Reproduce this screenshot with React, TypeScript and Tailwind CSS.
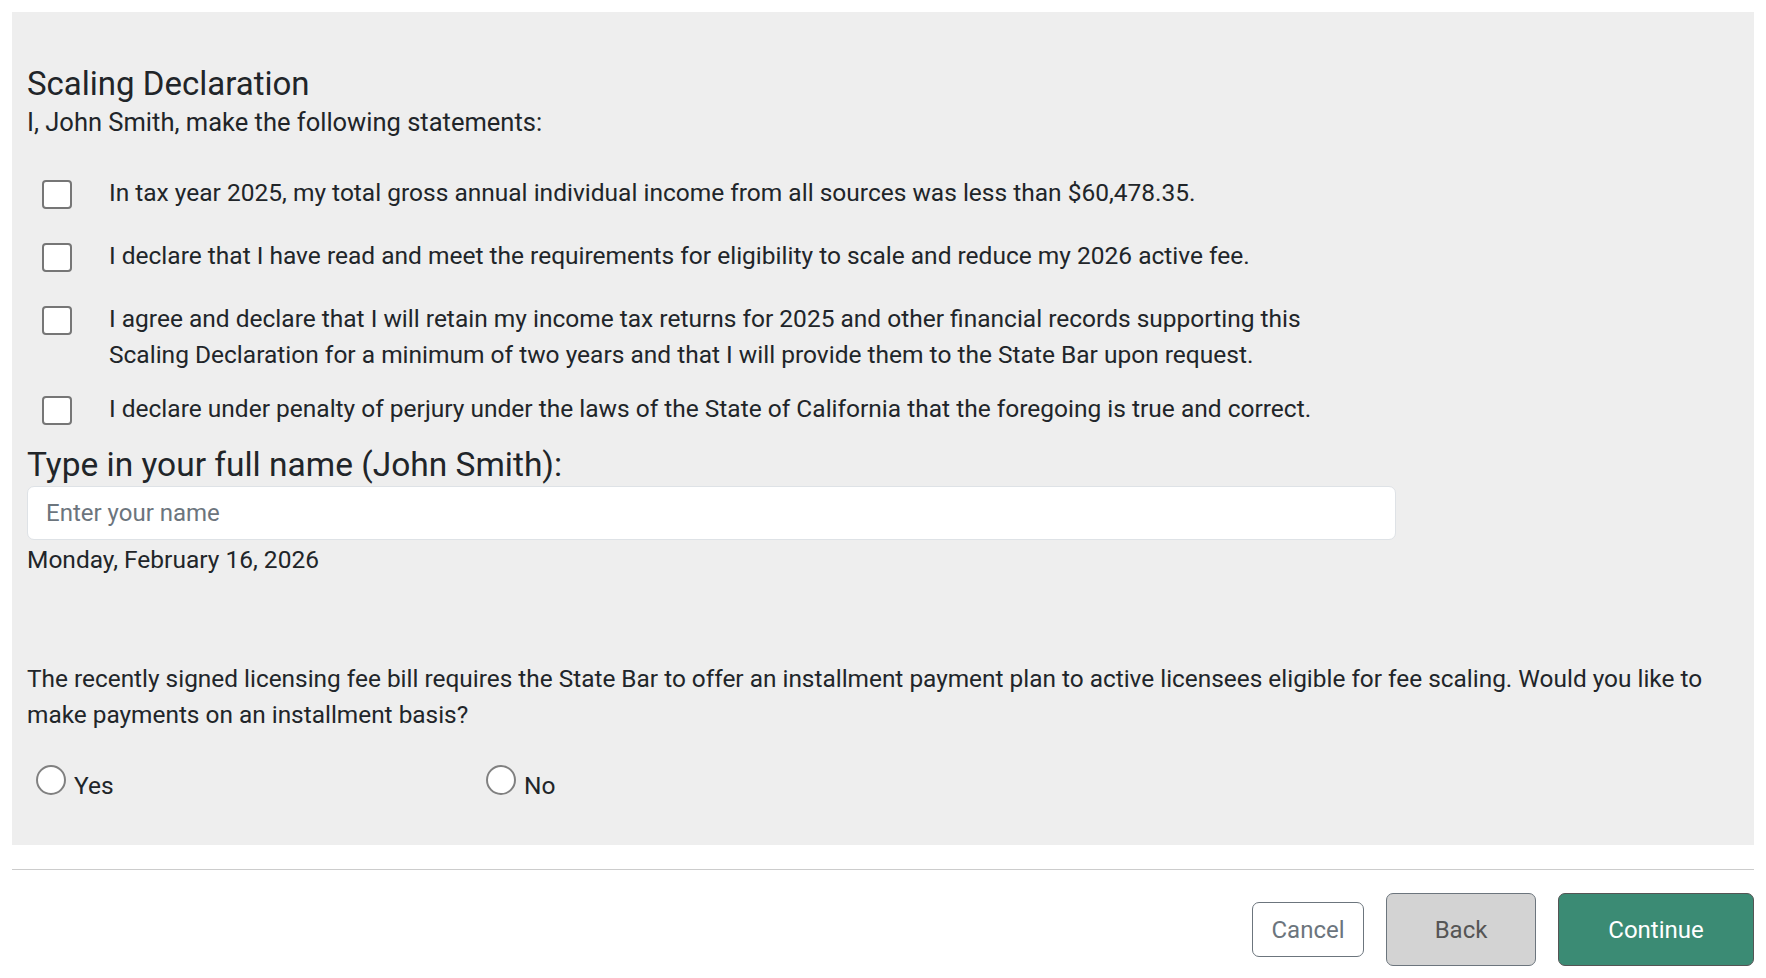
import React from "react";

const statements = [
  "In tax year 2025, my total gross annual individual income from all sources was less than $60,478.35.",
  "I declare that I have read and meet the requirements for eligibility to scale and reduce my 2026 active fee.",
  "I agree and declare that I will retain my income tax returns for 2025 and other financial records supporting this Scaling Declaration for a minimum of two years and that I will provide them to the State Bar upon request.",
  "I declare under penalty of perjury under the laws of the State of California that the foregoing is true and correct.",
];

function CheckRow({ text }: { text: string }) {
  return (
    <label className="flex items-start">
      <span className="ml-[15px] mt-[14px] mb-[20px] w-[30px] h-[29px] shrink-0 rounded-[4px] border-2 border-[#767676] bg-white" />
      <span className="ml-[37px] max-w-[1240px] py-[9px] leading-[36px] text-[24.5px]">{text}</span>
    </label>
  );
}

function Radio({ label }: { label: string }) {
  return (
    <label className="flex items-start w-[450px]">
      <span className="w-[30px] h-[30px] shrink-0 rounded-full border-2 border-[#808080] bg-white" />
      <span className="ml-[8px] pt-[3px] leading-[36px] text-[24.5px]">{label}</span>
    </label>
  );
}

export default function App() {
  return (
    <div className="min-h-screen bg-white px-[12px] pt-[12px] font-['Roboto',sans-serif] text-[24px] text-[#212529]">
      <div className="bg-[#eeeeee] px-[15px] pt-[53px] pb-[41px]">
        <h2 className="text-[33px] leading-[37px]">Scaling Declaration</h2>
        <p className="mt-[2px] leading-[36px] text-[25.5px]">I, John Smith, make the following statements:</p>

        <div className="mt-[26px]">
          {statements.map((s) => (
            <CheckRow key={s} text={s} />
          ))}
        </div>

        <h3 className="text-[33.5px] leading-[40px]">Type in your full name (John Smith):</h3>
        <input
          type="text"
          placeholder="Enter your name"
          className="mt-[1px] block w-[1369px] h-[54px] rounded-[7px] border border-[#dee2e6] bg-white px-[18px] text-[24px] placeholder:text-[#6c757d] outline-none"
        />
        <p className="mt-[2px] leading-[36px] text-[24.5px]">Monday, February 16, 2026</p>

        <p className="mt-[83px] leading-[36px] text-[24.4px]">
          The recently signed licensing fee bill requires the State Bar to offer an installment payment plan to active
          licensees eligible for fee scaling. Would you like to make payments on an installment basis?
        </p>

        <div className="mt-[32px] flex pl-[9px]">
          <Radio label="Yes" />
          <Radio label="No" />
        </div>
      </div>

      <hr className="mt-[24px] border-t border-[#cccccc]" />

      <div className="mt-[23px] flex items-center justify-end gap-[22px]">
        <button className="h-[55px] w-[112px] rounded-[7px] border border-[#6c757d] bg-white text-[#6c757d]">
          Cancel
        </button>
        <button className="h-[73px] w-[150px] rounded-[7px] border border-[#6c757d] bg-[#d3d3d3] text-[#555555]">
          Back
        </button>
        <button className="h-[73px] w-[196px] rounded-[7px] border border-[#555555] bg-[#3b8b74] text-white">
          Continue
        </button>
      </div>
    </div>
  );
}
